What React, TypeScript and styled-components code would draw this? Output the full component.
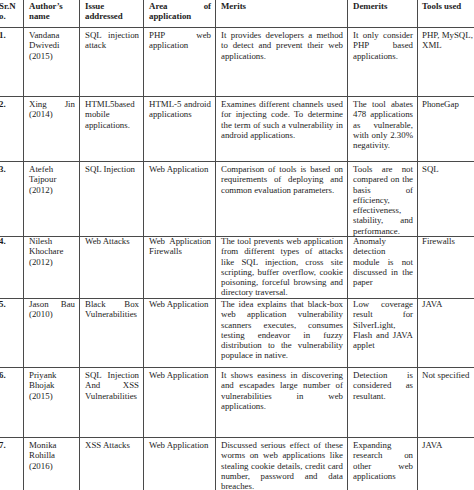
import React from 'react';
import styled, { createGlobalStyle } from 'styled-components';

const GlobalStyle = createGlobalStyle`
    html, body {
        margin: 0;
        padding: 0;
        background: #ffffff;
        overflow: hidden;
    }
`;

const COLS = '28px 56px 64px 72px 132px 70px 66px';

const Table = styled.div`
    margin-left: -4px;
    width: 488px;
    font-family: "Liberation Serif", "Times New Roman", serif;
    font-size: 8.85px;
    line-height: 10.3px;
    color: #1c1c1c;
`;

const Row = styled.div<{ h: number }>`
    display: grid;
    grid-template-columns: ${COLS};
    height: ${props => props.h}px;
`;

const Cell = styled.div<{ head?: boolean; num?: boolean }>`
    box-sizing: border-box;
    padding: ${props => (props.head ? '1px' : '2px')} 4px 0 5px;
    border-right: 1px solid #4a4a4a;
    border-bottom: 1px solid #4a4a4a;
    text-align: justify;
    font-weight: ${props => (props.head || props.num ? 700 : 400)};
    white-space: normal;
`;

const NumCell = styled(Cell)`
    padding-left: 3px;
    padding-right: 5px;
    overflow-wrap: anywhere;
`;

const ToolsCell = styled(Cell)`
    padding-left: 4px;
    padding-right: 0;
    text-align: left;
`;

interface Entry {
    no: string;
    author: string;
    issue: string;
    area: string;
    merits: string;
    demerits: string;
    tools: string;
    h: number;
}

const rows: Entry[] = [
    {
        no: '1.',
        author: 'Vandana Dwivedi (2015)',
        issue: 'SQL injection attack',
        area: 'PHP web application',
        merits: 'It provides developers a method to detect and prevent their web applications.',
        demerits: 'It only consider PHP based applications.',
        tools: 'PHP, MySQL, XML',
        h: 69,
    },
    {
        no: '2.',
        author: 'Xing Jin (2014)',
        issue: 'HTML5based mobile applications.',
        area: 'HTML-5 android applications',
        merits: 'Examines different channels used for injecting code. To determine the term of such a vulnerability in android applications.',
        demerits: 'The tool abates 478 applications as vulnerable, with only 2.30% negativity.',
        tools: 'PhoneGap',
        h: 65,
    },
    {
        no: '3.',
        author: 'Atefeh Tajpour (2012)',
        issue: 'SQL Injection',
        area: 'Web Application',
        merits: 'Comparison of tools is based on requirements of deploying and common evaluation parameters.',
        demerits: 'Tools are not compared on the basis of efficiency, effectiveness, stability, and performance.',
        tools: 'SQL',
        h: 72,
    },
    {
        no: '4.',
        author: 'Nilesh Khochare (2012)',
        issue: 'Web Attacks',
        area: 'Web Application Firewalls',
        merits: 'The tool prevents web application from different types of attacks like SQL injection, cross site scripting, buffer overflow, cookie poisoning, forceful browsing and directory traversal.',
        demerits: 'Anomaly detection module is not discussed in the paper',
        tools: 'Firewalls',
        h: 63,
    },
    {
        no: '5.',
        author: 'Jason Bau (2010)',
        issue: 'Black Box Vulnerabilities',
        area: 'Web Application',
        merits: 'The idea explains that black-box web application vulnerability scanners executes, consumes testing endeavor in fuzzy distribution to the vulnerability populace in native.',
        demerits: 'Low coverage result for SilverLight, Flash and JAVA applet',
        tools: 'JAVA',
        h: 71,
    },
    {
        no: '6.',
        author: 'Priyank Bhojak (2015)',
        issue: 'SQL Injection And XSS Vulnerabilities',
        area: 'Web Application',
        merits: 'It shows easiness in discovering and escapades large number of vulnerabilities in web applications.',
        demerits: 'Detection is considered as resultant.',
        tools: 'Not specified',
        h: 70,
    },
    {
        no: '7.',
        author: 'Monika Rohilla (2016)',
        issue: 'XSS Attacks',
        area: 'Web Application',
        merits: 'Discussed serious effect of these worms on web applications like stealing cookie details, credit card number, password and data breaches.',
        demerits: 'Expanding research on other web applications',
        tools: 'JAVA',
        h: 70,
    },
];

const App: React.FC = () => (
    <>
        <GlobalStyle />
        <Table>
            <Row h={28}>
                <NumCell head>Sr.No.</NumCell>
                <Cell head>Author’s name</Cell>
                <Cell head>Issue addressed</Cell>
                <Cell head>Area of application</Cell>
                <Cell head>Merits</Cell>
                <Cell head>Demerits</Cell>
                <ToolsCell head>Tools used</ToolsCell>
            </Row>
            {rows.map(r => (
                <Row key={r.no} h={r.h}>
                    <NumCell num>{r.no}</NumCell>
                    <Cell>{r.author}</Cell>
                    <Cell>{r.issue}</Cell>
                    <Cell>{r.area}</Cell>
                    <Cell>{r.merits}</Cell>
                    <Cell>{r.demerits}</Cell>
                    <ToolsCell>{r.tools}</ToolsCell>
                </Row>
            ))}
        </Table>
    </>
);

export default App;
